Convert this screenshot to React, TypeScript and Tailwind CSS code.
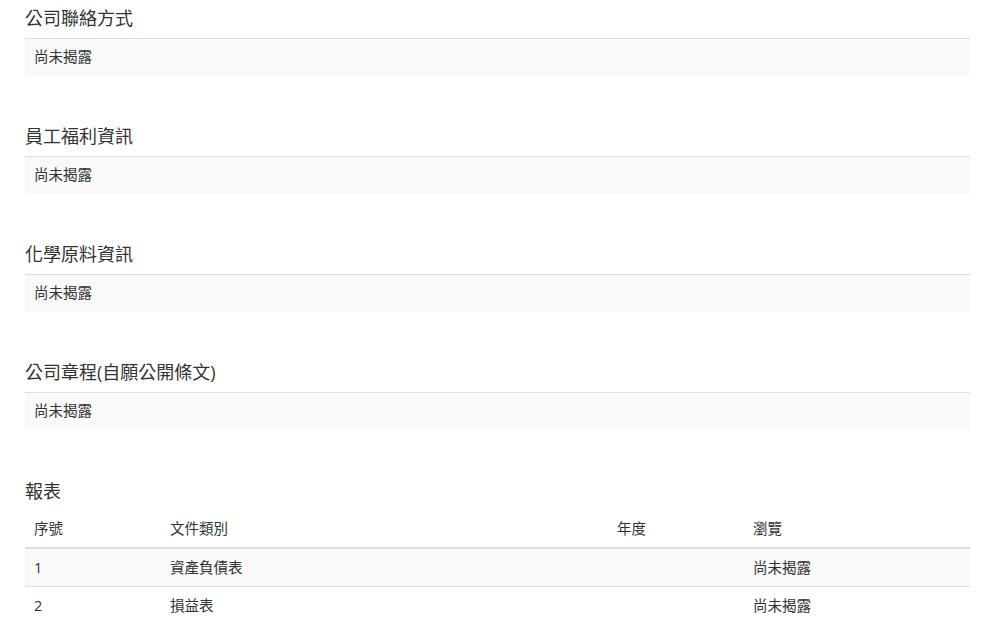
import React from "react";

const sections = ["公司聯絡方式", "員工福利資訊", "化學原料資訊", "公司章程(自願公開條文)"];

const reports = [
  { no: "1", type: "資產負債表", year: "", view: "尚未揭露" },
  { no: "2", type: "損益表", year: "", view: "尚未揭露" },
];

const App: React.FC = () => {
  return (
    <div
      className="min-h-screen bg-white pl-[25px] pr-[15px] text-[#333]"
      style={{ fontFamily: '"Open Sans", "Noto Sans CJK TC", sans-serif' }}
    >
      {sections.map((title) => (
        <div key={title} className="mb-[42px]">
          <h4 className="pt-[8px] pb-[10px] text-[18px] leading-[20px]">{title}</h4>
          <div className="border-t border-[#ddd] bg-[#f9f9f9] px-[9px] pt-[8px] pb-[9px] text-[14.5px] leading-[20px]">
            尚未揭露
          </div>
        </div>
      ))}

      {/* 報表 */}
      <div className="pt-[1px]">
        <h4 className="pt-[8px] pb-[10px] text-[18px] leading-[20px]">報表</h4>
        <table className="w-full border-collapse text-[14.5px] leading-[20px]">
          <thead>
            <tr className="border-b-2 border-[#ddd] text-left">
              <th className="w-[136px] px-[9px] pt-[8px] pb-[8px] font-normal">序號</th>
              <th className="w-[447px] px-[9px] pt-[8px] pb-[8px] font-normal">文件類別</th>
              <th className="w-[136px] px-[9px] pt-[8px] pb-[8px] font-normal">年度</th>
              <th className="px-[9px] pt-[8px] pb-[8px] font-normal">瀏覽</th>
            </tr>
          </thead>
          <tbody>
            {reports.map((r, i) => (
              <tr
                key={r.no}
                className={`border-t border-[#ddd] first:border-t-0 ${i % 2 === 0 ? "bg-[#f9f9f9]" : ""}`}
              >
                <td className="px-[9px] pt-[9px] pb-[8px]">{r.no}</td>
                <td className="px-[9px] pt-[9px] pb-[8px]">{r.type}</td>
                <td className="px-[9px] pt-[9px] pb-[8px]">{r.year}</td>
                <td className="px-[9px] pt-[9px] pb-[8px]">{r.view}</td>
              </tr>
            ))}
          </tbody>
        </table>
      </div>
    </div>
  );
};

export default App;
